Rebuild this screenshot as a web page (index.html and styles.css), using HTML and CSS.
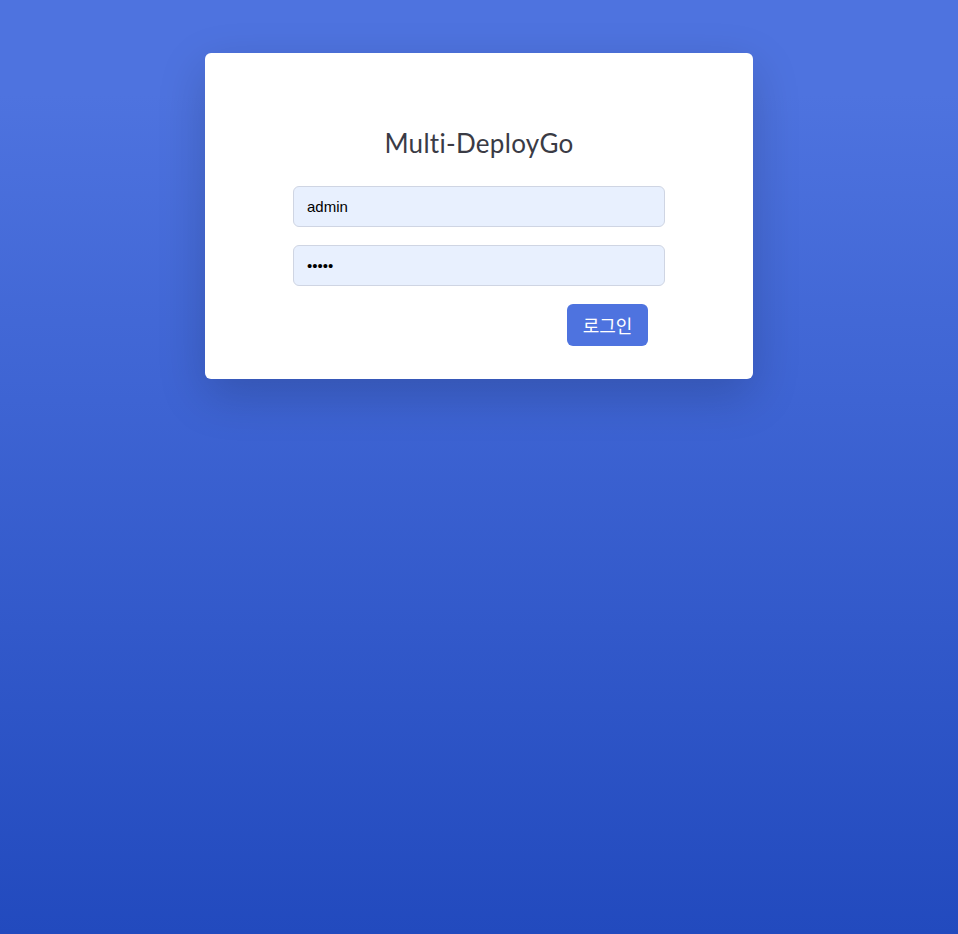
FILE: index.html
```html
<!DOCTYPE html>
<html lang="ko">
<head>
<meta charset="utf-8">
<title>Multi-DeployGo</title>
<link rel="stylesheet" href="styles.css">
</head>
<body>
<div class="page">
  <div class="card">
    <h1 class="title">Multi-DeployGo</h1>
    <form class="form">
      <input class="field" type="text" value="admin">
      <input class="field" type="password" value="admin">
      <div class="actions">
        <button class="btn" type="button">로그인</button>
      </div>
    </form>
  </div>
</div>
</body>
</html>
```
FILE: styles.css
```css
html, body {
  margin: 0;
  padding: 0;
}
body {
  min-height: 934px;
  background: linear-gradient(180deg, #4e73df 10%, #224abe 100%);
  font-family: Lato, "Noto Sans", "Noto Sans CJK KR", sans-serif;
}
.page {
  display: flex;
  justify-content: center;
  padding-top: 53px;
}
.card {
  width: 548px;
  box-sizing: border-box;
  background: #fff;
  border-radius: 6px;
  padding: 75px 88px 33px;
  box-shadow: 0 1rem 3rem rgba(0, 0, 0, 0.175);
}
.title {
  margin: 0 0 28px;
  text-align: center;
  font-size: 26px;
  line-height: 30px;
  font-weight: 400;
  color: #3a3b45;
  letter-spacing: 0.3px;
}
.form {
  display: flex;
  flex-direction: column;
  gap: 18px;
}
.field {
  display: block;
  width: 100%;
  height: 41px;
  box-sizing: border-box;
  margin: 0;
  padding: 0 13px;
  border: 1px solid #cfd5e3;
  border-radius: 6px;
  background: #e8f0fe;
  font-family: "Liberation Sans", Arial, sans-serif;
  font-size: 15px;
  color: #000;
  outline: none;
}
.actions {
  display: flex;
  justify-content: flex-end;
  padding-right: 17px;
}
.btn {
  width: 81px;
  height: 42px;
  border: none;
  border-radius: 6px;
  background: #4e73df;
  color: #fff;
  font-family: "Noto Sans CJK KR", "Noto Sans", sans-serif;
  font-size: 18px;
  padding: 0;
  cursor: pointer;
}
```
